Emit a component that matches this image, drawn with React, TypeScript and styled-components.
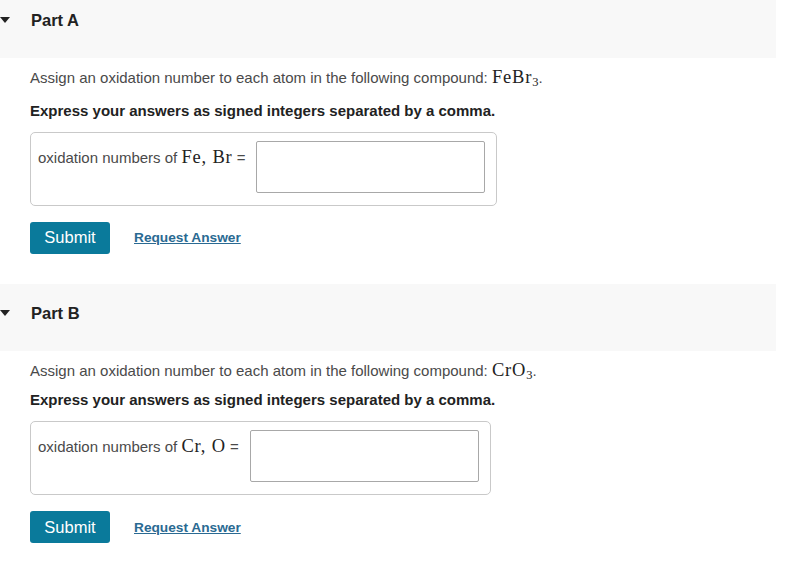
import React from "react";
import styled, { createGlobalStyle } from "styled-components";

const Global = createGlobalStyle`
  html, body { margin: 0; padding: 0; background: #fff; }
  body { font-family: "Liberation Sans", Arial, sans-serif; color: #333; overflow: hidden; }
`;

const Page = styled.div`
  width: 776px;
  margin-top: -9px;
`;

const Section = styled.section`
  padding-bottom: 30px;
`;

const Header = styled.div`
  height: 67px;
  box-sizing: border-box;
  background: #f8f8f8;
  display: flex;
  align-items: flex-start;
  padding-top: 19px;
`;

const Caret = styled.span`
  width: 0;
  height: 0;
  margin-top: 7px;
  border-left: 5.5px solid transparent;
  border-right: 5.5px solid transparent;
  border-top: 6px solid #222;
`;

const Title = styled.h2`
  margin: 0 0 0 21px;
  font-size: 16.5px;
  line-height: 20px;
  font-weight: bold;
  color: #222;
`;

const Body = styled.div`
  padding-left: 30px;
`;

const Prompt = styled.p`
  margin: 9px 0 0;
  font-size: 15px;
  line-height: 21px;
  color: #4a4a4a;
`;

const Instruction = styled.p<{ $gap: number }>`
  margin: ${(p) => p.$gap}px 0 0;
  font-size: 15px;
  line-height: 20px;
  font-weight: bold;
  color: #222;
`;

/* chemistry in a math-style serif, as the formula renderer sets it */
const Math = styled.span`
  font-family: "Liberation Serif", "Times New Roman", serif;
  font-size: 18.5px;
  letter-spacing: 0.8px;
  line-height: 1;
  color: #222;
`;

const Sub = styled.sub`
  font-size: 12.5px;
  vertical-align: -3px;
  line-height: 1;
  letter-spacing: 0;
`;

const AnswerBox = styled.div`
  margin-top: 11px;
  display: inline-flex;
  align-items: flex-start;
  border: 1px solid #c9c9c9;
  border-radius: 5px;
  padding: 8px 11px 12px 7px;
`;

const Label = styled.label`
  margin-top: 7px;
  font-size: 15px;
  line-height: 20px;
  color: #4a4a4a;
  white-space: nowrap;
`;

const Input = styled.input`
  margin-left: 11px;
  width: 229px;
  height: 52px;
  box-sizing: border-box;
  border: 1px solid #a8a8a8;
  border-radius: 2px;
  background: #fff;
`;

const Actions = styled.div`
  margin-top: 16px;
  display: flex;
  align-items: center;
`;

const SubmitButton = styled.button`
  width: 80px;
  height: 32px;
  border: none;
  border-radius: 3px;
  background: #0a7a9b;
  color: #fff;
  font-family: "Liberation Sans", Arial, sans-serif;
  font-size: 16.5px;
  padding: 0;
`;

const RequestLink = styled.a`
  margin-left: 24px;
  font-size: 13.7px;
  font-weight: bold;
  color: #2a6a92;
  text-decoration: underline;
  cursor: pointer;
`;

type Part = {
  name: string;
  formula: [string, string];
  atoms: [string, string];
  gap: number;
};

const parts: Part[] = [
  { name: "Part A", formula: ["FeBr", "3"], atoms: ["Fe", "Br"], gap: 12 },
  { name: "Part B", formula: ["CrO", "3"], atoms: ["Cr", "O"], gap: 9 },
];

export default function App() {
  return (
    <>
      <Global />
      <Page>
        {parts.map((p) => (
          <Section key={p.name}>
            <Header>
              <Caret />
              <Title>{p.name}</Title>
            </Header>
            <Body>
              <Prompt>
                Assign an oxidation number to each atom in the following compound:{" "}
                <Math>
                  {p.formula[0]}
                  <Sub>{p.formula[1]}</Sub>
                </Math>
                .
              </Prompt>
              <Instruction $gap={p.gap}>
                Express your answers as signed integers separated by a comma.
              </Instruction>
              <AnswerBox>
                <Label>
                  oxidation numbers of{" "}
                  <Math>
                    {p.atoms[0]}, {p.atoms[1]}
                  </Math>{" "}
                  =
                </Label>
                <Input type="text" />
              </AnswerBox>
              <Actions>
                <SubmitButton>Submit</SubmitButton>
                <RequestLink>Request Answer</RequestLink>
              </Actions>
            </Body>
          </Section>
        ))}
      </Page>
    </>
  );
}
